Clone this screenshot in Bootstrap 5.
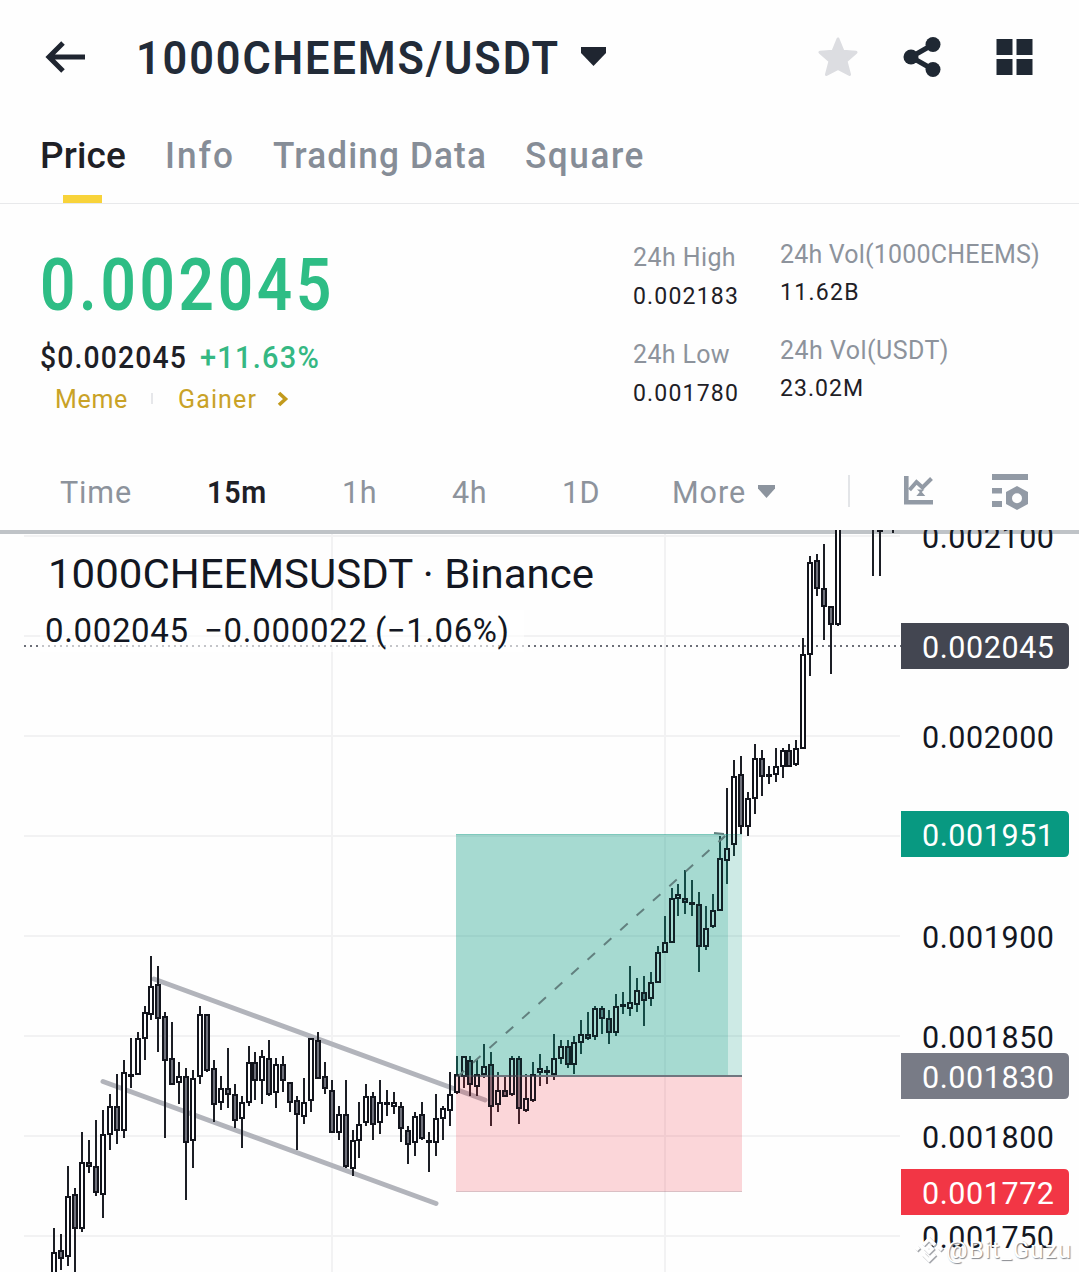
<!DOCTYPE html>
<html lang="en">
<head>
<meta charset="utf-8">
<meta name="viewport" content="width=device-width, initial-scale=1">
<title>1000CHEEMS/USDT</title>
<link href="https://cdn.jsdelivr.net/npm/bootstrap@5.3.0/dist/css/bootstrap.min.css" rel="stylesheet">
<style>
  body { font-family: Roboto, "Liberation Sans", sans-serif; width: 1079px; height: 1272px; overflow: hidden; color: #1e2329; background: #fefefe; }
  .fit { display: block; white-space: nowrap; flex: none; transform-origin: 0 50%; }
  svg { display: block; flex: none; }
  .top-bar { height: 114px; padding-left: 45px; }
  .pair { font-size: 47px; line-height: 60px; font-weight: 600; color: #222b38; margin-left: 51px; padding-top: 2px; }
  .caret-lg { margin-left: 21px; }
  .ic-star { margin-left: 212px; }
  .ic-share { margin-left: 45px; }
  .ic-grid { margin-left: 55px; }
  .tab-row { height: 90px; padding-left: 40px; border-bottom: 1px solid #e8e9eb; font-size: 37px; line-height: 84px; font-weight: 500; color: #868d97; }
  .tab-row .on { color: #1e2026; position: relative; }
  .tab-row .on::after { content: ""; position: absolute; left: 23px; top: 81px; width: 39px; height: 8px; background: #f8d33a; }
  .stats { height: 250px; padding-left: 40px; }
  .left-col { width: 593px; padding-top: 41px; }
  .big { font-size: 73px; line-height: 80px; font-weight: 600; color: #2ebd85; }
  .sub-line { font-size: 30.5px; line-height: 40px; margin-top: 13px; font-weight: 500; color: #1e2026; }
  .green { color: #35b883; }
  .tags-line { font-size: 25px; line-height: 40px; margin-top: 2px; padding-left: 15px; color: #c9a227; }
  .tag-sep { width: 2px; height: 11px; background: #e6e7ea; margin: 0 25px 4px 23px; }
  .col-a { width: 147px; padding-top: 38px; }
  .col-b { padding-top: 35px; }
  .lbl { font-size: 25px; line-height: 32px; color: #8d939c; }
  .val { font-size: 24.5px; line-height: 32px; color: #1e2026; margin-top: 6px; }
  .gap-stat { margin-top: 27px; }
  .col-b .val { margin-top: 5px; }
  .time-row { height: 76px; padding-top: 2px; padding-left: 60px; font-size: 30.5px; color: #8d939c; }
  .time-row .on { color: #1e2026; font-weight: 600; }
  .v-sep { width: 2px; height: 32px; background: #e3e5e8; }
</style>
<script src="https://cdn.jsdelivr.net/npm/bootstrap@5.3.0/dist/js/bootstrap.bundle.min.js"></script>
</head>
<body>
<header class="top-bar d-flex align-items-center">
  <svg width="40" height="32" viewBox="0 0 40 32" fill="none" stroke="#1f2530" stroke-width="5"><path d="M40 16H5M18 2L4 16l14 14"/></svg>
  <span class="pair fit" data-w="424" data-sx=".92">1000CHEEMS/USDT</span>
  <svg class="caret-lg" width="25" height="20" viewBox="0 0 25 20"><path d="M0 0h25v6L12.500 19 0 6z" fill="#1f2530"/></svg>
  <svg class="ic-star" width="40" height="42" viewBox="0 0 40 42"><path d="M20 3l5 12.300 13 1-10 8.900 3.500 13.300L20 32.500 8.500 38.500 12 25.200 2 16.300l13-1z" fill="#dcdde1" stroke="#dcdde1" stroke-width="3" stroke-linejoin="round"/></svg>
  <svg class="ic-share" width="38" height="40" viewBox="0 0 38 40" fill="#1f2833"><path d="M30 7.500L8 20l22 12.500" fill="none" stroke="#1f2833" stroke-width="5"/><circle cx="8" cy="20" r="7.500"/><circle cx="30" cy="7.500" r="7.500"/><circle cx="30" cy="32.500" r="7.500"/></svg>
  <svg class="ic-grid" width="37" height="37" viewBox="0 0 37 37" fill="#1f2833"><path d="M0.500 0h16v16h-16zM20.500 0h16v16h-16zM0.500 20h16v16h-16zM20.500 20h16v16h-16z"/></svg>
</header>

<nav class="tab-row d-flex">
  <span class="on fit" data-w="86">Price</span>
  <span class="fit" data-w="70" data-sx=".95" style="margin-left:39px">Info</span>
  <span class="fit" data-w="214" data-sx=".95" style="margin-left:38px">Trading Data</span>
  <span class="fit" data-w="120" data-sx=".95" style="margin-left:38px">Square</span>
</nav>

<section class="stats d-flex">
  <div class="left-col">
    <div class="big fit" data-w="295" data-sx=".85">0.002045</div>
    <div class="sub-line d-flex">
      <span class="fit" data-w="147" data-sx=".93">$0.002045</span>
      <span class="fit green" data-w="120" data-sx=".95" style="margin-left:13px">+11.63%</span>
    </div>
    <div class="tags-line d-flex align-items-center">
      <span class="fit" data-w="73">Meme</span>
      <i class="tag-sep"></i>
      <span class="fit" data-w="79">Gainer</span>
      <svg width="12" height="16" viewBox="0 0 12 16" style="margin:0 0 2px 20px"><path d="M2 2l6.500 6L2 14" fill="none" stroke="#c29a1c" stroke-width="3.600"/></svg>
    </div>
  </div>
  <div class="col-a">
    <div class="lbl fit" data-w="103">24h High</div>
    <div class="val fit" data-w="106" data-sx=".94">0.002183</div>
    <div class="lbl fit gap-stat" data-w="97">24h Low</div>
    <div class="val fit" data-w="106" data-sx=".94">0.001780</div>
  </div>
  <div class="col-b">
    <div class="lbl fit" data-w="260">24h Vol(1000CHEEMS)</div>
    <div class="val fit" data-w="80" data-sx=".94">11.62B</div>
    <div class="lbl fit gap-stat" data-w="169">24h Vol(USDT)</div>
    <div class="val fit" data-w="84" data-sx=".94">23.02M</div>
  </div>
</section>

<div class="time-row d-flex align-items-center">
  <span class="fit" data-w="72">Time</span>
  <span class="fit on" data-w="60" data-sx=".94" style="margin-left:75px">15m</span>
  <span class="fit" data-w="35" style="margin-left:75px">1h</span>
  <span class="fit" data-w="35" style="margin-left:75px">4h</span>
  <span class="fit" data-w="38" style="margin-left:75px">1D</span>
  <span class="fit" data-w="74" style="margin-left:72px">More</span>
  <svg width="17" height="13" viewBox="0 0 17 13" class="mb-1" style="margin-left:12px"><path d="M0 0h17v3.500L8.500 13 0 3.500z" fill="#8c949e"/></svg>
  <i class="v-sep mb-1" style="margin-left:73px"></i>
  <svg width="30" height="30" viewBox="0 0 30 30" class="mb-1" style="margin-left:54px" fill="none" stroke="#929aa5"><path d="M2.300 0v26.200H29" stroke-width="4.600"/><path d="M5.500 14l7-8 6 5.500L27.500 2.500" stroke-width="4"/><path d="M13 13.500h7.500L17.800 16l3.500 4h-9l3.500-4z" fill="#929aa5" stroke="none"/></svg>
  <svg width="37" height="37" viewBox="0 0 37 37" class="mb-1" style="margin-left:58px" fill="#929aa5"><path d="M0 1h36v6H0zM0 15h10v5.500H0zM0 28h10v6H0z"/><path fill-rule="evenodd" d="M25 13l11 6v12l-11 6-11-6V19zm0 7.300a5 5 0 1 0 0 10 5 5 0 0 0 0-10z"/></svg>
</div>

<svg id="chart" width="1079" height="742" viewBox="0 530 1079 742" font-family="Roboto, 'Liberation Sans', sans-serif">
  <rect x="0" y="530" width="1079" height="4" fill="#bfc3c7"/>
  <g id="grid" stroke="#f2f2f3" stroke-width="2"></g>
  <path d="M24 646H902" stroke="#6c6f78" stroke-width="2" stroke-dasharray="2 4"/>
  <g stroke="#b2b4bb" stroke-width="5" stroke-linecap="round"><path d="M154 979L485 1100"/><path d="M103 1081.500L436 1203.500"/></g>
  <g id="candles" stroke="#12141d" stroke-width="2"></g>
  <rect x="456" y="834" width="286" height="242" fill="#089981" fill-opacity=".2"/>
  <rect x="456" y="834" width="272" height="242" fill="#089981" fill-opacity=".2"/>
  <rect x="456" y="1076" width="286" height="116" fill="#f23645" fill-opacity=".2"/>
  <path d="M456 834.500H742" stroke="#089981" stroke-opacity=".25"/>
  <path d="M456 1191.500H742" stroke="#787b86" stroke-opacity=".25"/>
  <path d="M456 1076H742" stroke="#70767f" stroke-width="2"/>
  <g id="outlines" fill="none" stroke="#12141d" stroke-opacity=".7" stroke-width="2"></g>
  <g fill="none" stroke="#62807f" stroke-width="2"><path d="M459 1075.500L725 836" stroke-dasharray="10 12" stroke-dashoffset="3"/><path d="M714 833l10 1M721 840l4-4"/></g>
  <rect x="40" y="610" width="484" height="42" fill="#fff" fill-opacity=".6"/>
  <g fill="#131722">
    <text x="48" y="588" font-size="41.500" textLength="546" lengthAdjust="spacingAndGlyphs">1000CHEEMSUSDT · Binance</text>
    <g font-size="33">
      <text x="45" y="642" textLength="143">0.002045</text>
      <text x="204" y="642" textLength="163">−0.000022</text>
      <text x="375" y="642" textLength="134">(−1.06%)</text>
    </g>
  </g>
  <g id="axis" font-size="30.500"></g>
  <g fill="none" stroke="#a5a7ac" stroke-width="4"><path d="M924 1246l6-6 6 6M924 1255l6 6 6-6M930 1247l3 3-3 3-3-3zM917 1251l3-3M940 1248l3 3"/></g>
  <g fill="none" stroke="#fff" stroke-width="3.500"><path d="M923 1245l6-6 6 6M923 1254l6 6 6-6M929 1246l3 3-3 3-3-3zM916 1250l3-3M939 1247l3 3"/></g>
  <text x="946" y="1258" font-size="24" textLength="125" fill="#fff" style="text-shadow:1px 1px 1px #85878c">@Bit_Guzu</text>
</svg>

<script>
  // Spread every label over its column width; data-sx narrows the glyphs themselves.
  document.querySelectorAll('.fit').forEach(function (el) {
    var r = document.createRange();
    r.selectNodeContents(el);
    var w = +el.dataset.w, sx = +(el.dataset.sx || 1);
    el.style.letterSpacing = ((w / sx - r.getBoundingClientRect().width) / el.textContent.length) + 'px';
    el.style.width = w + 'px';
    if (sx !== 1) el.style.transform = 'scaleX(' + sx + ')';
  });

  // Candles: centre x, high, body top, body bottom, low, falling (1) or rising (0).
  var candles = [
    [54,1228,1252,1280,1280,0],[61,1234,1250,1259,1270,1],[68,1166,1196,1257,1266,0],[75,1188,1194,1229,1272,1],
    [82,1132,1162,1229,1232,0],[89,1140,1162,1167,1173,1],[96,1120,1166,1193,1196,1],[103,1110,1134,1195,1218,0],
    [110,1094,1106,1135,1150,0],[117,1074,1106,1131,1144,1],[124,1060,1072,1131,1138,0],[131,1038,1074,1077,1088,1],
    [138,1032,1038,1075,1075,0],[145,1006,1012,1039,1060,0],[151,956,986,1015,1020,0],[158,966,984,1019,1052,1],
    [165,1012,1016,1061,1138,1],[172,1022,1058,1085,1085,1],[179,1062,1076,1083,1104,0],[186,1068,1076,1143,1200,1],
    [193,1070,1078,1141,1168,0],[200,1006,1014,1077,1084,0],[207,1014,1014,1071,1072,1],[214,1060,1068,1105,1122,1],
    [221,1076,1088,1103,1110,0],[228,1048,1088,1095,1108,1],[235,1084,1094,1121,1128,1],[242,1096,1102,1119,1148,0],
    [249,1046,1062,1103,1106,0],[255,1052,1062,1081,1100,1],[262,1050,1056,1081,1104,0],[269,1040,1058,1095,1096,1],
    [276,1058,1064,1093,1108,0],[283,1056,1064,1081,1092,1],[290,1082,1082,1103,1112,1],[297,1096,1100,1115,1150,1],
    [304,1078,1102,1117,1124,0],[311,1038,1038,1101,1112,0],[318,1032,1040,1079,1079,1],[325,1062,1076,1089,1094,1],
    [332,1080,1090,1133,1133,1],[339,1106,1114,1133,1140,0],[346,1080,1114,1167,1168,1],[353,1130,1140,1169,1176,0],
    [359,1102,1124,1141,1158,0],[366,1084,1096,1123,1126,0],[373,1092,1096,1125,1140,1],[380,1080,1102,1123,1134,0],
    [387,1090,1102,1105,1116,0],[394,1092,1102,1107,1114,0],[401,1102,1106,1129,1142,1],[408,1126,1130,1145,1164,1],
    [415,1112,1116,1143,1156,0],[422,1102,1114,1139,1140,1],[429,1132,1140,1143,1172,0],[436,1094,1118,1143,1156,0],
    [443,1106,1108,1119,1140,0],[450,1072,1094,1111,1126,0],[457,1056,1074,1093,1094,0],[464,1056,1056,1077,1088,0],
    [470,1056,1060,1085,1096,1],[477,1060,1074,1087,1096,0],[484,1044,1066,1075,1078,0],[491,1052,1064,1107,1126,1],
    [498,1072,1090,1105,1112,0],[505,1076,1090,1097,1097,1],[512,1056,1058,1095,1096,0],[519,1056,1058,1109,1124,1],
    [526,1074,1098,1111,1112,0],[533,1062,1074,1101,1102,0],[540,1054,1068,1073,1086,0],[547,1066,1070,1073,1084,0],
    [554,1034,1058,1075,1080,0],[561,1040,1046,1059,1064,0],[568,1040,1046,1065,1068,1],[574,1036,1042,1065,1074,0],
    [581,1020,1034,1043,1054,0],[588,1012,1034,1039,1040,1],[595,1006,1008,1037,1040,0],[602,1006,1008,1019,1034,1],
    [609,1010,1018,1033,1044,1],[616,994,1006,1033,1036,0],[623,992,1004,1007,1014,0],[630,966,1002,1009,1016,0],
    [637,978,990,1005,1012,0],[644,976,992,1001,1026,1],[651,972,982,999,1006,0],[658,946,952,983,983,0],
    [665,916,942,953,953,0],[672,888,898,943,943,0],[678,884,894,899,916,0],[685,870,898,903,914,1],
    [692,880,902,905,916,0],[699,892,904,947,972,1],[706,906,928,947,950,0],[713,894,910,927,928,0],
    [720,836,858,911,911,0],[727,788,848,861,884,0],[734,760,776,845,856,0],[741,756,774,827,834,1],
    [748,792,798,827,836,0],[755,744,758,799,814,0],[762,750,758,777,796,1],[769,766,774,777,784,0],
    [776,748,766,775,782,0],[783,748,750,767,778,0],[789,744,750,767,767,1],[796,740,748,765,766,0],
    [803,638,654,749,749,0],[810,556,562,655,676,0],[817,554,560,589,596,1],[824,544,588,607,640,1],
    [831,606,606,625,674,1],[838,500,500,625,626,0],[873,500,500,520,576,0],[880,500,500,532,576,1],[893,500,500,520,533,0]
  ];
  function body(c, fill) {
    return '<rect x="' + (c[0] - 2) + '" y="' + (c[2] + 1) + '" width="4" height="' + Math.max(1, c[3] - c[2] - 2) + '"' + fill + '/>';
  }
  document.getElementById('candles').innerHTML = candles.map(function (c) {
    return '<path d="M' + c[0] + ' ' + c[1] + 'V' + c[4] + '" stroke="#1c1e25"/>' +
      body(c, ' fill="' + (c[5] ? '#6f717b' : '#fff') + '"');
  }).join('');
  document.getElementById('outlines').innerHTML = candles.map(function (c) { return body(c, ''); }).join('');

  var g = '';
  for (var y = 536; y < 1272; y += 100) g += '<path d="M24 ' + y + 'H900"/>';
  g += '<path d="M332 534V1272M665 534V1272"/>';
  document.getElementById('grid').innerHTML = g;

  // Axis: text baseline, label, background of a price tag.
  document.getElementById('axis').innerHTML = [
    [548, '0.002100'], [748, '0.002000'], [948, '0.001900'], [1048, '0.001850'], [1148, '0.001800'], [1248, '0.001750'],
    [658, '0.002045', '#434651'], [846, '0.001951', '#089981'], [1088, '0.001830', '#787b86'], [1204, '0.001772', '#f23645']
  ].map(function (a) {
    var t = a[0] - 35;
    return (a[2] ? '<path d="M901 ' + t + 'h163q5 0 5 5v36q0 5-5 5h-163z" fill="' + a[2] + '"/>' : '') +
      '<text x="922" y="' + a[0] + '" textLength="132" fill="' + (a[2] ? '#fff' : '#131722') + '">' + a[1] + '</text>';
  }).join('');
</script>
</body>
</html>
